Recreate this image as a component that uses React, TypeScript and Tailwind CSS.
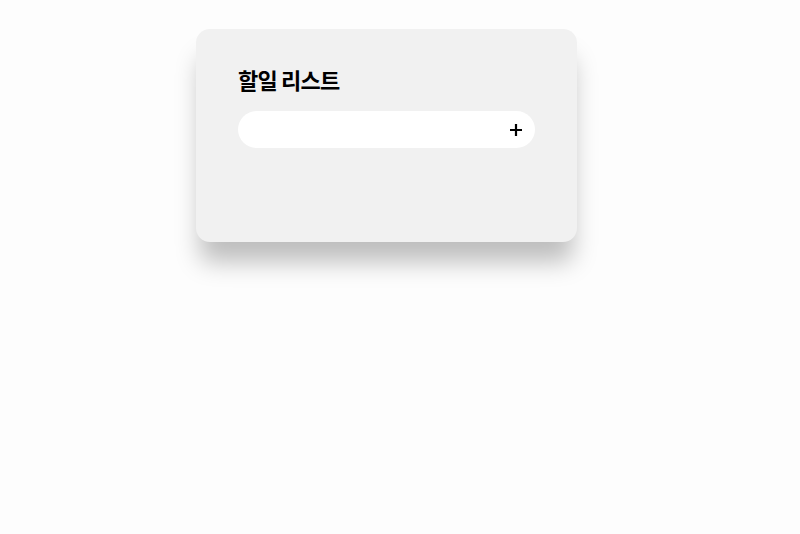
export default function App() {
  return (
    <div className="min-h-[534px] bg-[#fdfdfd] pt-[29px] pl-[196px] font-['Noto_Sans_CJK_KR',sans-serif]">
      <div className="flex h-[213px] w-[381px] flex-col rounded-[14px] bg-[#f1f1f1] px-[42px] pt-[34px] shadow-[0_24px_24px_-4px_rgba(0,0,0,0.25)]">
        <h1 className="text-[22px] font-bold leading-[32px] tracking-[-0.8px] text-black">할일 리스트</h1>
        <div className="mt-[16px] flex h-[37px] items-center justify-end rounded-full bg-white pr-[13px]">
          <input className="min-w-0 flex-1 bg-transparent pl-4 text-sm outline-none" />
          <svg width="12" height="12" viewBox="0 0 12 12" className="text-black">
            <path d="M6 0v12M0 6h12" stroke="currentColor" strokeWidth="2.2" />
          </svg>
        </div>
      </div>
    </div>
  );
}
